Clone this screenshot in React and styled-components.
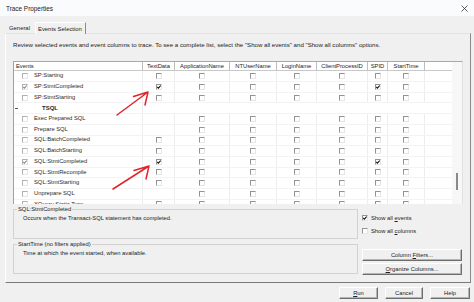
import React from "react";
import styled, { createGlobalStyle } from "styled-components";

const GlobalStyle = createGlobalStyle`
  html, body {
    margin: 0;
    padding: 0;
    background: #f0f0f0;
  }
  body {
    font-family: "Liberation Sans", Arial, sans-serif;
    color: #000;
  }
`;

// column widths of the event grid: Events, TextData, ApplicationName, NTUserName,
// LoginName, ClientProcessID, SPID, StartTime, filler
const COLS = "129px 32px 55px 47px 40px 51px 20px 37px 1fr";
const HEADERS = [
  "TextData",
  "ApplicationName",
  "NTUserName",
  "LoginName",
  "ClientProcessID",
  "SPID",
  "StartTime",
];

// x = checked, o = unchecked, - = no box
const ROWS = [
  { name: "SP:Starting", cells: "ooooooo" },
  { name: "SP:StmtCompleted", cells: "xooooxo", on: true },
  { name: "SP:StmtStarting", cells: "ooooooo" },
  { name: "TSQL", category: true },
  { name: "Exec Prepared SQL", cells: "-oooooo" },
  { name: "Prepare SQL", cells: "-oooooo" },
  { name: "SQL:BatchCompleted", cells: "ooooooo" },
  { name: "SQL:BatchStarting", cells: "ooooooo" },
  { name: "SQL:StmtCompleted", cells: "xooooxo", on: true },
  { name: "SQL:StmtRecompile", cells: "ooooooo" },
  { name: "SQL:StmtStarting", cells: "ooooooo" },
  { name: "Unprepare SQL", cells: "-oooooo" },
  { name: "XQuery Static Type", cells: "ooooooo" },
];

const Check = ({ checked, dim }) => (
  <Box $dim={dim}>
    {checked && (
      <svg width="4" height="4" viewBox="0 0 4 4">
        <polyline
          points="0.3,1.9 1.4,3.1 3.7,0.5"
          fill="none"
          stroke={dim ? "#8a8a8a" : "#111"}
          strokeWidth="1.1"
        />
      </svg>
    )}
  </Box>
);

const App = () => {
  return (
    <>
      <GlobalStyle />
      <Window>
        <TitleBar>
          <span>Trace Properties</span>
          <svg width="7" height="7" viewBox="0 0 7 7">
            <path d="M0.5 0.5 L6.5 6.5 M6.5 0.5 L0.5 6.5" stroke="#333" strokeWidth="0.8" />
          </svg>
        </TitleBar>
        <TabStrip>
          <Tab>General</Tab>
          <Tab $active>Events Selection</Tab>
        </TabStrip>
        <Panel>
          <Desc>
            Review selected events and event columns to trace. To see a complete list, select the
            "Show all events" and "Show all columns" options.
          </Desc>
          <GridFrame>
            <Table>
              <HeadRow>
                <HeadCell $left>Events</HeadCell>
                {HEADERS.map((h) => (
                  <HeadCell key={h}>{h}</HeadCell>
                ))}
                <HeadFiller />
              </HeadRow>
              {ROWS.map((r) =>
                r.category ? (
                  <Row key={r.name}>
                    <EventCell>
                      <Expander />
                      <CategoryName>{r.name}</CategoryName>
                    </EventCell>
                  </Row>
                ) : (
                  <Row key={r.name}>
                    <EventCell>
                      <Check dim checked={r.on} />
                      <EventName>{r.name}</EventName>
                    </EventCell>
                    {r.cells.split("").map((c, i) => (
                      <Cell key={i}>{c !== "-" && <Check checked={c === "x"} />}</Cell>
                    ))}
                    <Cell />
                  </Row>
                )
              )}
            </Table>
            <ScrollTrack>
              <Thumb />
            </ScrollTrack>
          </GridFrame>
          <Bottom>
            <InfoColumn>
              <Group>
                <Legend>SQL:StmtCompleted</Legend>
                <GroupText>Occurs when the Transact-SQL statement has completed.</GroupText>
              </Group>
              <Group $gap>
                <Legend>StartTime (no filters applied)</Legend>
                <GroupText>Time at which the event started, when available.</GroupText>
              </Group>
            </InfoColumn>
            <Options>
              <OptionRow>
                <Check checked />
                <span>
                  Show all <u>e</u>vents
                </span>
              </OptionRow>
              <OptionRow $second>
                <Check />
                <span>
                  Show all <u>c</u>olumns
                </span>
              </OptionRow>
              <Button $w={100} $top={14}>
                Column <u>F</u>ilters...
              </Button>
              <Button $w={100} $top={2}>
                <u>O</u>rganize Columns...
              </Button>
            </Options>
          </Bottom>
        </Panel>
        <Footer>
          <Button $w={39}>
            <u>R</u>un
          </Button>
          <Button $w={38}>Cancel</Button>
          <Button $w={40}>Help</Button>
        </Footer>
        <Marks width="474" height="302" viewBox="0 0 474 302">
          <g stroke="#e0262b" strokeWidth="1.5" fill="none" strokeLinecap="round">
            <path d="M117 115 L148 92 M148 92 L133.5 96.5 M148 92 L145 105" />
            <path d="M113 189 L149 166 M149 166 L134 170.5 M149 166 L146 179" />
          </g>
        </Marks>
      </Window>
    </>
  );
};

export default App;

const Window = styled.div`
  position: relative;
  width: 474px;
  height: 302px;
  overflow: hidden;
  display: flex;
  flex-direction: column;
  background: #f0f0f0;
  font-size: 5.8px;
`;

const TitleBar = styled.div`
  height: 16px;
  flex: none;
  display: flex;
  align-items: center;
  justify-content: space-between;
  padding: 1px 6px 0 6px;
  box-sizing: border-box;
  background: #f9fbfd;
  font-size: 6.4px;
  color: #1a1a1a;
`;

const TabStrip = styled.div`
  height: 17px;
  flex: none;
  display: flex;
  align-items: flex-end;
  padding-left: 5px;
  gap: 1px;
`;

const Tab = styled.div`
  height: ${(p) => (p.$active ? 12 : 11)}px;
  line-height: ${(p) => (p.$active ? 12 : 11)}px;
  padding: ${(p) => (p.$active ? "0 3px 0 2px" : "0 3px")};
  box-sizing: border-box;
  margin-bottom: ${(p) => (p.$active ? -1 : 0)}px;
  border-right: 1px solid ${(p) => (p.$active ? "#8a8a8a" : "transparent")};
  border-left: 1px solid ${(p) => (p.$active ? "#ffffff" : "transparent")};
  border-top: 1px solid ${(p) => (p.$active ? "#ffffff" : "transparent")};
  background: #f0f0f0;
  position: relative;
  z-index: 1;
  font-size: 5.9px;
  color: #222;
`;

const Panel = styled.div`
  height: 250px;
  flex: none;
  margin-left: 5px;
  width: 466px;
  box-sizing: border-box;
  border-top: 1px solid #e2e2e2;
  border-left: 1px solid #ffffff;
  border-right: 1px solid #8a8a8a;
  border-bottom: 1px solid #7a7a7a;
  padding: 0 7px;
  display: flex;
  flex-direction: column;
`;

const Desc = styled.div`
  margin-top: 7px;
  height: 8px;
  line-height: 8px;
  white-space: nowrap;
  font-size: 6.1px;
  color: #222;
`;

const GridFrame = styled.div`
  margin-top: 12px;
  height: 143px;
  display: flex;
  box-sizing: border-box;
  border-top: 1px solid #a8a8a8;
  border-left: 1px solid #a0a0a0;
  border-right: 1px solid #e2e2e2;
  background: #fff;
  overflow: hidden;
`;

const Table = styled.div`
  flex: 1;
  min-width: 0;
  overflow: hidden;
`;

const HeadRow = styled.div`
  display: grid;
  grid-template-columns: ${COLS};
  height: 9.4px;
  border-bottom: 1px solid #c8c8c8;
  box-sizing: border-box;
`;

const HeadCell = styled.div`
  box-sizing: border-box;
  border-right: 1px solid #bdbdbd;
  line-height: 8.4px;
  text-align: ${(p) => (p.$left ? "left" : "center")};
  padding-left: ${(p) => (p.$left ? 2 : 0)}px;
  white-space: nowrap;
  overflow: hidden;
  color: #222;
  background: #fff;
`;

const HeadFiller = styled.div`
  background: #fff;
`;

const Row = styled.div`
  display: grid;
  grid-template-columns: ${COLS};
  height: 10.7px;
  box-sizing: border-box;
  border-bottom: 1px solid #f3f3f3;
`;

const Cell = styled.div`
  display: flex;
  align-items: center;
  justify-content: center;
  border-right: 1px solid #ededed;
  &:last-child {
    border-right: none;
  }
`;

const EventCell = styled.div`
  display: flex;
  align-items: center;
  padding-left: 8px;
  gap: 6px;
  border-right: 1px solid #ededed;
  white-space: nowrap;
  color: #2a2a2a;
`;

const EventName = styled.span`
  line-height: 1;
`;

const Expander = styled.span`
  width: 3px;
  height: 1px;
  background: #555;
  margin-left: -7px;
  margin-right: 18px;
`;

const CategoryName = styled.span`
  font-weight: bold;
  font-size: 6px;
`;

const Box = styled.span`
  display: inline-flex;
  align-items: center;
  justify-content: center;
  flex: none;
  box-sizing: border-box;
  width: 6px;
  height: 6px;
  background: #fff;
  border-top: 1px solid ${(p) => (p.$dim ? "#b0b0b0" : "#939393")};
  border-left: 1px solid ${(p) => (p.$dim ? "#b0b0b0" : "#939393")};
  border-right: 1px solid #e6e6e6;
  border-bottom: 1px solid #e6e6e6;
`;

const ScrollTrack = styled.div`
  width: 10px;
  flex: none;
  position: relative;
  background: #f7f7f7;
`;

const Thumb = styled.div`
  position: absolute;
  left: 4px;
  top: 111px;
  width: 2px;
  height: 17px;
  background: #8a8a8a;
`;

const Bottom = styled.div`
  display: flex;
  gap: 4px;
  margin-top: 1px;
`;

const InfoColumn = styled.div`
  width: 345px;
  display: flex;
  flex-direction: column;
`;

const Group = styled.fieldset`
  margin: ${(p) => (p.$gap ? 1 : 0)}px 0 0 0;
  padding: 0 0 0 3px;
  height: 34px;
  box-sizing: border-box;
  border: 1px solid #d2d2d2;
  min-width: 0;
`;

const Legend = styled.legend`
  padding: 0 1px;
  line-height: 8px;
  font-size: 5.8px;
  color: #222;
`;

const GroupText = styled.div`
  margin-top: 1px;
  padding-left: 6px;
  line-height: 8px;
  color: #222;
`;

const Options = styled.div`
  width: 100px;
  display: flex;
  flex-direction: column;
`;

const OptionRow = styled.div`
  display: flex;
  align-items: center;
  gap: 3px;
  height: 8px;
  margin-top: ${(p) => (p.$second ? 5 : 9)}px;
  color: #222;
`;

const Button = styled.button`
  width: ${(p) => p.$w}px;
  height: 12px;
  margin-top: ${(p) => p.$top || 0}px;
  padding: 0;
  box-sizing: border-box;
  font-family: "Liberation Sans", Arial, sans-serif;
  font-size: 5.8px;
  color: #222;
  background: #f0f0f0;
  border: 1px solid;
  border-color: #ffffff #6e6e6e #6e6e6e #ffffff;
  box-shadow: inset -1px -1px 0 #b4b4b4;
`;

const Footer = styled.div`
  flex: 1;
  display: flex;
  justify-content: flex-end;
  align-items: flex-start;
  padding: 4px 4px 0 0;
  gap: 7px;
`;

const Marks = styled.svg`
  position: absolute;
  left: 0;
  top: 0;
  pointer-events: none;
`;
